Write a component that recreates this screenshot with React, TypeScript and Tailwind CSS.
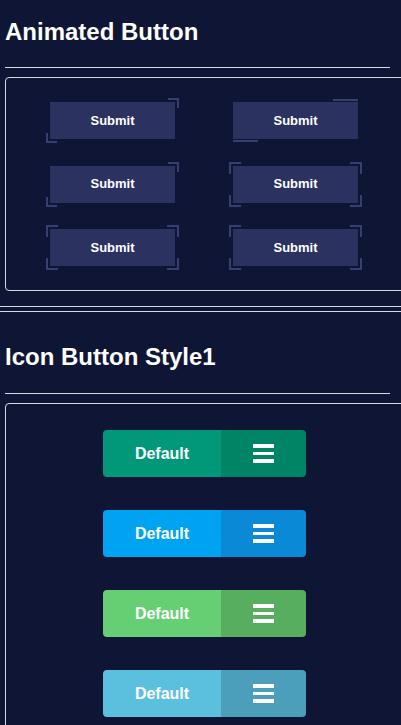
import React from "react";

type CornerMode = "pair" | "all" | "lines";

function Corners({ mode }: { mode: CornerMode }) {
  if (mode === "lines") {
    return (
      <>
        <span className="absolute -top-[3px] right-0 h-[2px] w-[25px] bg-[#383f70]" />
        <span className="absolute -bottom-[3px] left-0 h-[2px] w-[25px] bg-[#383f70]" />
      </>
    );
  }
  if (mode === "pair") {
    return (
      <>
        <span className="absolute -top-[4px] -right-[4px] h-[10px] w-[11px] border-t-2 border-r-2 border-[#383f70]" />
        <span className="absolute -bottom-[4px] -left-[4px] h-[10px] w-[11px] border-b-2 border-l-2 border-[#383f70]" />
      </>
    );
  }
  return (
    <>
      <span className="absolute -top-[4px] -left-[4px] h-[12px] w-[12px] border-t-2 border-l-2 border-[#383f70]" />
      <span className="absolute -top-[4px] -right-[4px] h-[12px] w-[12px] border-t-2 border-r-2 border-[#383f70]" />
      <span className="absolute -bottom-[4px] -left-[4px] h-[12px] w-[12px] border-b-2 border-l-2 border-[#383f70]" />
      <span className="absolute -bottom-[4px] -right-[4px] h-[12px] w-[12px] border-b-2 border-r-2 border-[#383f70]" />
    </>
  );
}

function SubmitButton({ mode }: { mode: CornerMode }) {
  return (
    <div className="flex justify-center">
      <button className="relative h-[37px] w-[125px] bg-[#2b325f] text-[13px] font-bold text-white">
        <Corners mode={mode} />
        Submit
      </button>
    </div>
  );
}

const iconButtons = [
  { main: "bg-[#009879]", side: "bg-[#008466]" },
  { main: "bg-[#00a2f2]", side: "bg-[#0a8ad6]" },
  { main: "bg-[#66cf74]", side: "bg-[#58ae5f]" },
  { main: "bg-[#5bc0de]", side: "bg-[#4b9fbb]" },
];

function IconButton({ main, side }: { main: string; side: string }) {
  return (
    <button className="flex h-[47px] w-[203px] overflow-hidden rounded-[4px] text-white">
      <span className={`flex w-[118px] items-center justify-center text-[16px] font-bold ${main}`}>
        Default
      </span>
      <span className={`flex flex-1 flex-col items-center justify-center gap-[4px] ${side}`}>
        <span className="h-[3.5px] w-[21px] bg-white" />
        <span className="h-[3.5px] w-[21px] bg-white" />
        <span className="h-[3.5px] w-[21px] bg-white" />
      </span>
    </button>
  );
}

export default function App() {
  return (
    <div
      className="min-h-[725px] overflow-hidden bg-[#0f1535] text-white"
      style={{ fontFamily: '"Liberation Sans", Arial, sans-serif' }}
    >
      {/* Animated Button */}
      <section className="pl-[5px] pt-[18px]">
        <h2 className="text-[24px] font-bold leading-[28px]">Animated Button</h2>
        <div className="mt-[21px] h-px w-[385px] bg-[#d8d8e0]" />
        <div className="mt-[9px] w-[430px] rounded-[4px] border border-[#d8d8e0] pb-[24px] pt-[24px] pl-[15px]">
          <div className="grid grid-cols-[183px_183px] gap-y-[26.5px]">
            <SubmitButton mode="pair" />
            <SubmitButton mode="lines" />
            <SubmitButton mode="pair" />
            <SubmitButton mode="all" />
            <SubmitButton mode="all" />
            <SubmitButton mode="all" />
          </div>
        </div>
      </section>

      <div className="mt-[15px] h-[6px] border-y border-[#d8d8e0]" />

      {/* Icon Button Style1 */}
      <section className="pl-[5px] pt-[31px]">
        <h2 className="text-[24px] font-bold leading-[28px]">Icon Button Style1</h2>
        <div className="mt-[22px] h-px w-[385px] bg-[#d8d8e0]" />
        <div className="mt-[9px] w-[430px] rounded-[4px] border border-[#d8d8e0] pb-[24px] pl-[97px] pt-[26px]">
          <div className="flex flex-col gap-[33px]">
            {iconButtons.map((b, i) => (
              <IconButton key={i} main={b.main} side={b.side} />
            ))}
          </div>
        </div>
      </section>
    </div>
  );
}
